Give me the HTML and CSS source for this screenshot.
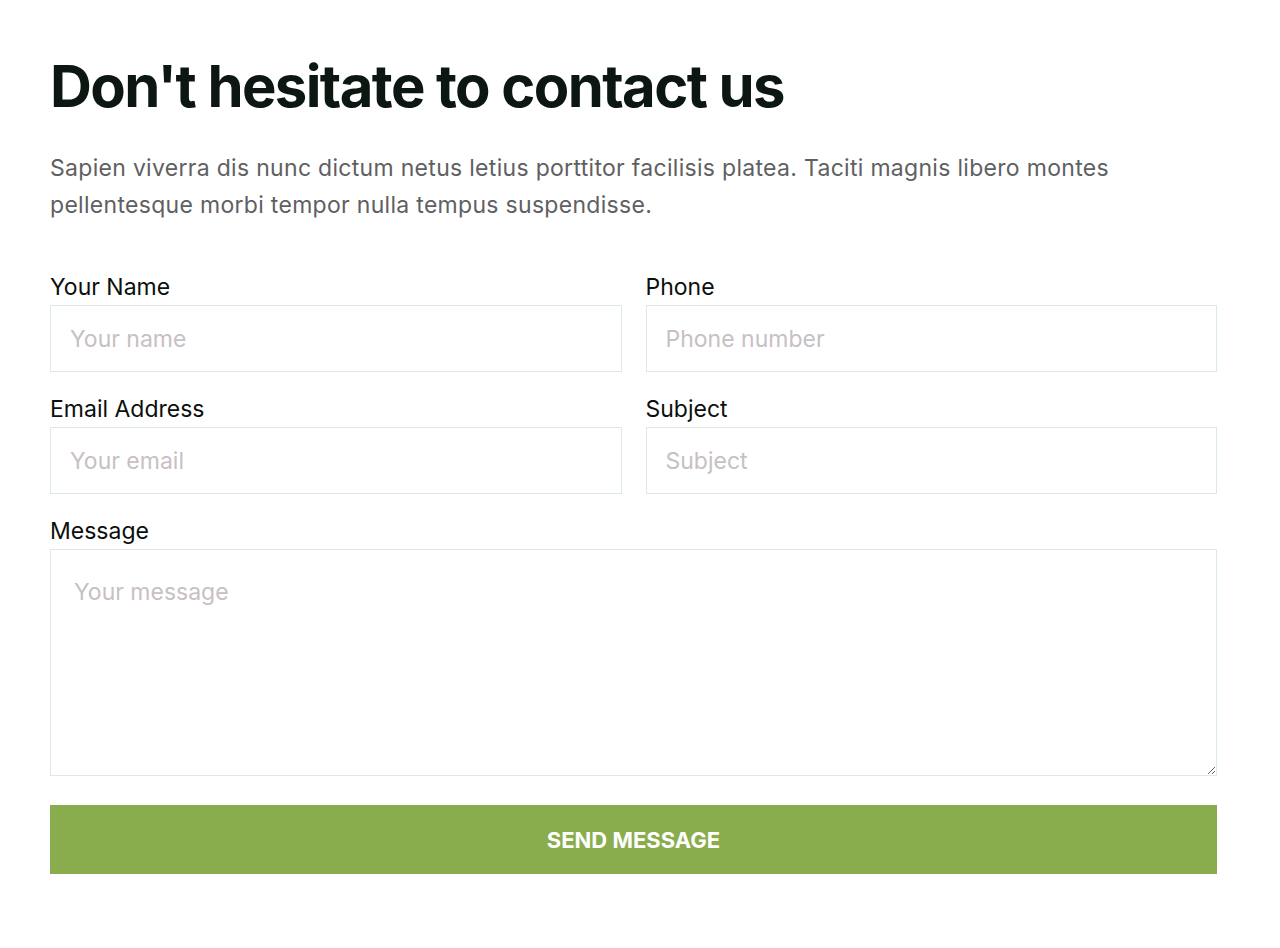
FILE: index.html
```html
<!DOCTYPE html>
<html lang="en">
<head>
    <meta charset="UTF-8">
    <meta name="viewport" content="width=device-width, initial-scale=1.0">
    <title>Contact us</title>
    <link rel="stylesheet" href="styles.css">
</head>
<body>
    <section class="contact">
        <h1 class="contact-title">Don't hesitate to contact us</h1>
        <p class="contact-intro">Sapien viverra dis nunc dictum netus letius porttitor facilisis platea. Taciti magnis libero montes pellentesque morbi tempor nulla tempus suspendisse.</p>
        <form class="contact-form">
            <div class="field">
                <label for="name">Your Name</label>
                <input id="name" type="text" placeholder="Your name">
            </div>
            <div class="field">
                <label for="phone">Phone</label>
                <input id="phone" type="text" placeholder="Phone number">
            </div>
            <div class="field">
                <label for="email">Email Address</label>
                <input id="email" type="email" placeholder="Your email">
            </div>
            <div class="field">
                <label for="subject">Subject</label>
                <input id="subject" type="text" placeholder="Subject">
            </div>
            <div class="field field-wide">
                <label for="message">Message</label>
                <textarea id="message" placeholder="Your message"></textarea>
            </div>
            <button type="button" class="send-btn">SEND MESSAGE</button>
        </form>
    </section>
</body>
</html>
```

FILE: styles.css
```css
*, *:before, *:after {
    padding: 0;
    margin: 0;
    box-sizing: border-box;
}
body {
    font-family: Inter, "Noto Sans", sans-serif;
    background: #fff;
    color: #0d1714;
}
.contact {
    width: 1167px;
    margin-left: 50px;
    padding-top: 50px;
}
.contact-title {
    font-size: 58px;
    line-height: 72px;
    font-weight: 700;
    letter-spacing: -1.6px;
    color: #0c1712;
}
.contact-intro {
    margin-top: 28px;
    font-size: 23px;
    line-height: 37px;
    color: #5f6062;
    letter-spacing: 0.3px;
}
/* form grid */
.contact-form {
    margin-top: 48px;
    display: grid;
    grid-template-columns: 1fr 1fr;
    column-gap: 24px;
    row-gap: 22px;
}
.field {
    display: flex;
    flex-direction: column;
}
.field-wide {
    grid-column: 1 / 3;
}
.field label {
    font-size: 23px;
    line-height: 30px;
    margin-bottom: 3px;
    color: #0b0f0d;
}
.field input,
.field textarea {
    font-family: inherit;
    font-size: 23px;
    color: #333;
    border: 1px solid #dbe9e8;
    background: #fff;
    outline: none;
}
.field input {
    height: 67px;
    padding: 0 19px;
}
.field textarea {
    height: 227px;
    padding: 27px 23px;
    line-height: 30px;
    resize: vertical;
}
.field input::placeholder,
.field textarea::placeholder {
    color: #c7c0c4;
}
.send-btn {
    grid-column: 1 / 3;
    margin-top: 7px;
    height: 69px;
    border: 0;
    background: #89ad4c;
    color: #fff;
    font-family: inherit;
    font-size: 22px;
    font-weight: 700;
    cursor: pointer;
}
```
